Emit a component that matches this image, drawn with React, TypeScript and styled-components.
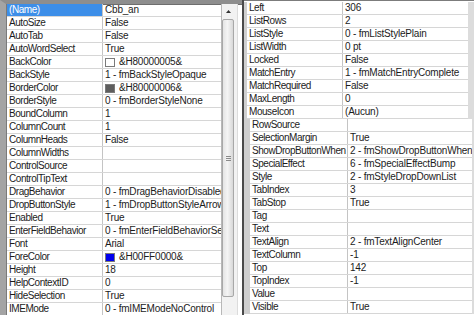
import React from "react"
import styled, { createGlobalStyle } from "styled-components"

const GlobalStyle = createGlobalStyle`
  html, body {
    margin: 0;
    padding: 0;
    background: #ffffff;
    overflow: hidden;
  }
  body {
    font-family: "Liberation Sans", Arial, sans-serif;
  }
`

const Screen = styled.div`
  display: flex;
  width: 474px;
  height: 315px;
  overflow: hidden;
  background: #ffffff;
`

const LeftWindow = styled.div`
  display: flex;
  width: 242px;
  height: 315px;
  box-sizing: border-box;
  border-top: 4px solid #8e8e8e;
  border-left: 6px solid #a4a4a4;
  box-shadow: inset 1px 1px 0 #6e6e6e;
  background: #ffffff;
`

const Grid = styled.div`
  display: flex;
  flex-direction: column;
  width: 216px;
  border-left: 1px solid #7a7a7a;
  border-right: 1px solid #b8b8b8;
  box-sizing: border-box;
`

const Row = styled.div<{ $nameWidth: number }>`
  display: grid;
  grid-template-columns: ${({ $nameWidth }) => $nameWidth}px 1fr;
  height: 13px;
  flex: none;
  box-sizing: border-box;
  border-bottom: 1px solid #d6d6d6;
  font-size: 10px;
  line-height: 12px;
  letter-spacing: -0.2px;
  color: #1c1c1c;
`

const NameCell = styled.div<{ $selected?: boolean }>`
  padding-left: 2px;
  white-space: nowrap;
  overflow: hidden;
  border-right: 1px solid #c4c4c4;
  letter-spacing: -0.45px;
  background: ${({ $selected }) => ($selected ? "#3d8ee8" : "#ffffff")};
  color: ${({ $selected }) => ($selected ? "#ffffff" : "inherit")};
`

const ValueCell = styled.div`
  display: flex;
  align-items: center;
  gap: 4px;
  padding-left: 2px;
  white-space: nowrap;
  overflow: hidden;
`

const Swatch = styled.span<{ $color: string }>`
  flex: none;
  width: 10px;
  height: 9px;
  box-sizing: border-box;
  border: 1px solid #7a7a7a;
  background: ${({ $color }) => $color};
`

const ScrollBar = styled.div`
  display: flex;
  flex-direction: column;
  width: 16px;
  background: #f2f2f2;
  border-right: 1px solid #dcdcdc;
  box-sizing: border-box;
`

const ArrowButton = styled.div`
  height: 15px;
  flex: none;
  display: flex;
  align-items: center;
  justify-content: center;
  padding-right: 3px;
`

const Thumb = styled.div`
  height: 278px;
  width: 12px;
  box-sizing: border-box;
  border: 1px solid #a8a8a8;
  border-radius: 2px;
  background: linear-gradient(90deg, #e4e4e4, #f4f4f4 45%, #d8d8d8);
  display: flex;
  align-items: center;
  justify-content: center;
`

const Grip = styled.div`
  display: flex;
  flex-direction: column;
  gap: 1px;
  span {
    display: block;
    width: 5px;
    height: 1px;
    background: #8a8a8a;
  }
`

const Divider = styled.div`
  width: 2px;
  background: #4a4a4a;
`

const RightWindow = styled.div`
  display: flex;
  flex-direction: column;
  flex: 1;
  padding-top: 1px;
  background: #ffffff;
  box-sizing: border-box;
  border-top: 1px solid #7c7c7c;
`

const Block = styled.div<{ $left: number; $right: number }>`
  display: flex;
  flex-direction: column;
  box-sizing: border-box;
  border-left: ${({ $left }) => $left}px solid #cfcfcf;
  border-right: ${({ $right }) => $right}px solid #dcdcdc;
  box-shadow: inset 1px 0 0 #7a7a7a;
`

type Prop = [string, string, string?]

const leftRows: Prop[] = [
  ["(Name)", "Cbb_an"],
  ["AutoSize", "False"],
  ["AutoTab", "False"],
  ["AutoWordSelect", "True"],
  ["BackColor", "&H80000005&", "#ffffff"],
  ["BackStyle", "1 - fmBackStyleOpaque"],
  ["BorderColor", "&H80000006&", "#5e5e5e"],
  ["BorderStyle", "0 - fmBorderStyleNone"],
  ["BoundColumn", "1"],
  ["ColumnCount", "1"],
  ["ColumnHeads", "False"],
  ["ColumnWidths", ""],
  ["ControlSource", ""],
  ["ControlTipText", ""],
  ["DragBehavior", "0 - fmDragBehaviorDisabled"],
  ["DropButtonStyle", "1 - fmDropButtonStyleArrow"],
  ["Enabled", "True"],
  ["EnterFieldBehavior", "0 - fmEnterFieldBehaviorSelectAll"],
  ["Font", "Arial"],
  ["ForeColor", "&H00FF0000&", "#0000ee"],
  ["Height", "18"],
  ["HelpContextID", "0"],
  ["HideSelection", "True"],
  ["IMEMode", "0 - fmIMEModeNoControl"],
]

const rightTop: Prop[] = [
  ["Left", "306"],
  ["ListRows", "2"],
  ["ListStyle", "0 - fmListStylePlain"],
  ["ListWidth", "0 pt"],
  ["Locked", "False"],
  ["MatchEntry", "1 - fmMatchEntryComplete"],
  ["MatchRequired", "False"],
  ["MaxLength", "0"],
  ["MouseIcon", "(Aucun)"],
]

const rightBottom: Prop[] = [
  ["RowSource", ""],
  ["SelectionMargin", "True"],
  ["ShowDropButtonWhen", "2 - fmShowDropButtonWhenAlways"],
  ["SpecialEffect", "6 - fmSpecialEffectBump"],
  ["Style", "2 - fmStyleDropDownList"],
  ["TabIndex", "3"],
  ["TabStop", "True"],
  ["Tag", ""],
  ["Text", ""],
  ["TextAlign", "2 - fmTextAlignCenter"],
  ["TextColumn", "-1"],
  ["Top", "142"],
  ["TopIndex", "-1"],
  ["Value", ""],
  ["Visible", "True"],
]

function PropRows({ rows, nameWidth, selectFirst }: { rows: Prop[]; nameWidth: number; selectFirst?: boolean }) {
  return (
    <>
      {rows.map(([name, value, color], i) => (
        <Row key={name} $nameWidth={nameWidth}>
          <NameCell $selected={selectFirst && i === 0}>{name}</NameCell>
          <ValueCell>
            {color && <Swatch $color={color} />}
            {value}
          </ValueCell>
        </Row>
      ))}
    </>
  )
}

function UpArrow() {
  return (
    <svg width="5" height="3" viewBox="0 0 5 3">
      <path d="M0 3 L2.5 0 L5 3 Z" fill="#333333" />
    </svg>
  )
}

export default function App() {
  return (
    <Screen>
      <GlobalStyle />
      <LeftWindow>
        <Grid>
          <PropRows rows={leftRows} nameWidth={96} selectFirst />
        </Grid>
        <ScrollBar>
          <ArrowButton>
            <UpArrow />
          </ArrowButton>
          <Thumb>
            <Grip>
              <span />
              <span />
              <span />
            </Grip>
          </Thumb>
        </ScrollBar>
      </LeftWindow>
      <Divider />
      <RightWindow>
        <Block $left={3} $right={6}>
          <PropRows rows={rightTop} nameWidth={96} />
        </Block>
        <Block $left={6} $right={2}>
          <PropRows rows={rightBottom} nameWidth={98} />
        </Block>
      </RightWindow>
    </Screen>
  )
}
